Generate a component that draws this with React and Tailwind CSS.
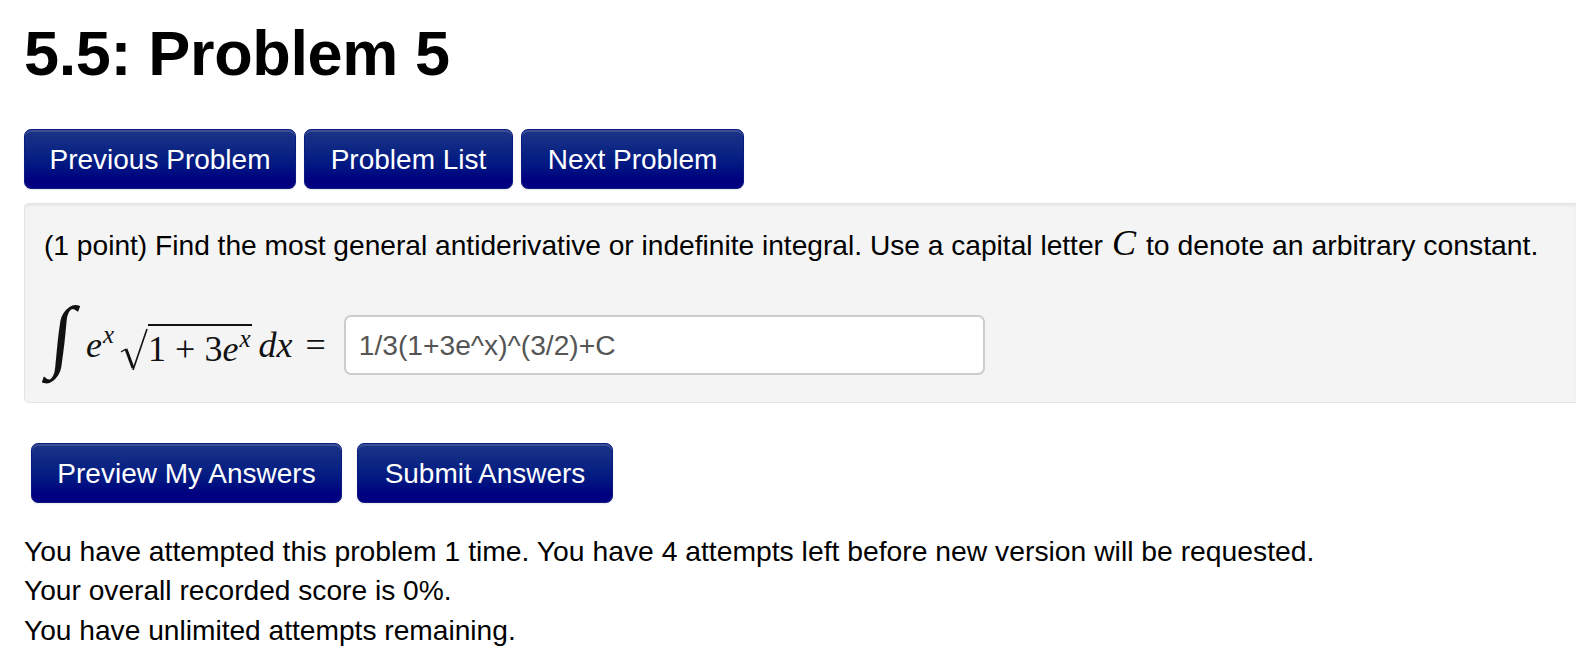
const navBtn =
  "h-[60px] rounded-[7px] border border-[#0a1a80] bg-gradient-to-b from-[#1c3486] to-[#000080] to-[85%] pt-[1px] shadow-[inset_0_2px_0_rgba(255,255,255,0.14),0_1px_2px_rgba(0,0,0,0.1)] text-[28px] leading-none text-white";

const serif = "font-['Liberation_Serif',serif]";

function Formula() {
  return (
    <div className={`flex items-center text-[#111] ${serif} italic text-[36px] leading-none`}>
      <span className="ml-[-2px] mr-[4px] h-[60px] w-[40px] -translate-y-[10px] -skew-x-6 text-center text-[80px] leading-[60px] not-italic">∫</span>
      <span>
        e<sup className="ml-[1px] top-[-14px] text-[25px] leading-none">x</sup>
      </span>
      <span className="ml-[6px] flex items-end">
        <svg className="mb-[-5px] h-[44px] w-[28px]" viewBox="0 0 28 44" fill="none">
          <path d="M1 24 L6 21" stroke="#111" strokeWidth="1.4" />
          <path d="M6 21 L13 40" stroke="#111" strokeWidth="3" />
          <path d="M13 42 L27 1" stroke="#111" strokeWidth="1.6" />
        </svg>
        <span className="border-t-2 border-[#111] pt-[5px] pr-[1px] not-italic">
          1 + 3<i>e</i>
          <sup className="ml-[1px] top-[-14px] text-[25px] italic leading-none">x</sup>
        </span>
      </span>
      <span className="ml-[7px]">dx</span>
      <span className="ml-[13px] not-italic">=</span>
    </div>
  );
}

export default function App() {
  return (
    <div className="min-h-[662px] w-full overflow-hidden bg-white pl-6 pt-[17px] font-['Liberation_Sans',sans-serif] text-black">
      <h1 className="text-[63px] font-bold leading-[72px] tracking-[-0.35px]">5.5: Problem 5</h1>

      <div className="mt-[40px] flex gap-2">
        <button className={`${navBtn} w-[272px]`}>Previous Problem</button>
        <button className={`${navBtn} w-[209px]`}>Problem List</button>
        <button className={`${navBtn} w-[223px]`}>Next Problem</button>
      </div>

      <div className="mt-[14px] h-[200px] rounded-l-[5px] border border-r-0 border-[#e3e3e3] bg-[#f4f4f4] pl-[19px] pt-[21px] shadow-[inset_0_2px_2px_rgba(0,0,0,0.05)]">
        <p className="flex items-baseline whitespace-nowrap text-[28.15px] leading-[36px]">
          (1 point) Find the most general antiderivative or indefinite integral. Use a capital letter
          <span className={`${serif} ml-[9px] mr-[10px] text-[36px] italic`}>C</span>
          <span className="text-[28.35px]">to denote an arbitrary constant.</span>
        </p>
        <div className="mt-[51px] flex items-center">
          <Formula />
          <input
            readOnly
            value="1/3(1+3e^x)^(3/2)+C"
            className="ml-[18px] h-[60px] w-[641px] rounded-[7px] border-2 border-[#cccccc] bg-white px-[13px] text-[28.2px] text-[#555555] outline-none"
          />
        </div>
      </div>

      <div className="ml-[7px] mt-[40px] flex gap-[15px]">
        <button className={`${navBtn} w-[311px]`}>Preview My Answers</button>
        <button className={`${navBtn} w-[256px]`}>Submit Answers</button>
      </div>

      <div className="mt-[28px] text-[28.15px] leading-[40px]">
        <p className="text-[28.3px]">You have attempted this problem 1 time. You have 4 attempts left before new version will be requested.</p>
        <p>Your overall recorded score is 0%.</p>
        <p>You have unlimited attempts remaining.</p>
      </div>
    </div>
  );
}
